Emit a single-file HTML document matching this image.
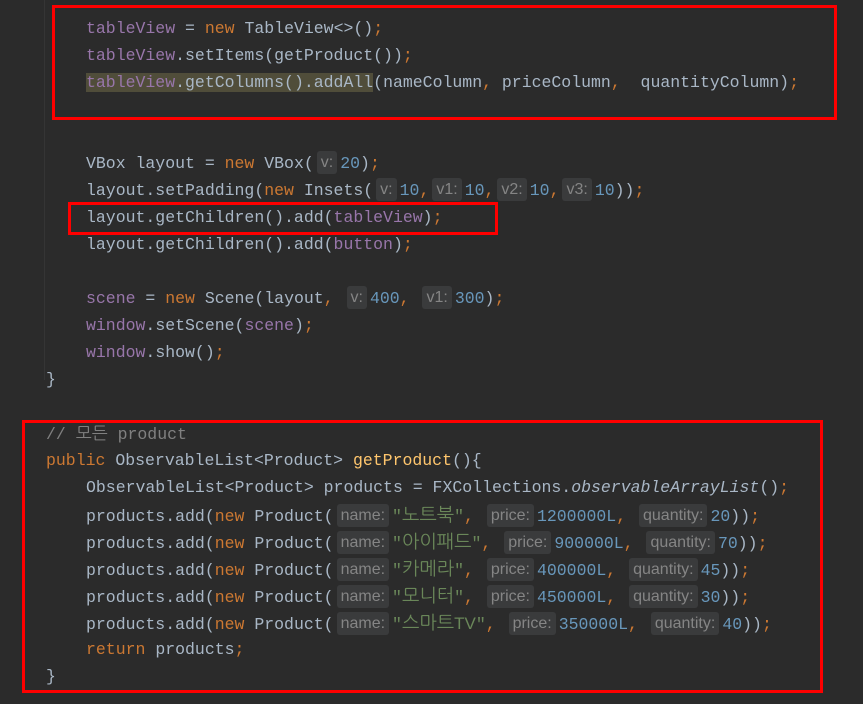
<!DOCTYPE html>
<html><head><meta charset="utf-8"><style>
body{margin:0;width:863px;height:704px;background:#2b2b2b;overflow:hidden;position:relative;font-family:"Liberation Mono","Noto Sans CJK KR",monospace;font-size:16.5px;color:#a9b7c6}
.l{position:absolute;height:27px;line-height:27px;white-space:pre}
.i{left:86px}.o{left:46px}
.f{color:#9876aa}.k{color:#cc7832}.n{color:#6897bb}.s{color:#6a8759}.c{color:#808080}.m{color:#ffc66d}.it{font-style:italic}
.ko{font-family:"NanumGothic","Noto Sans CJK KR",sans-serif;font-size:18.5px}
.h{display:inline-block;background:#3a3b3c;color:#858585;font-family:"Liberation Sans",sans-serif;font-size:16px;line-height:23px;height:23px;padding:0 4px;border-radius:3px;margin:0 3px;vertical-align:1px}
.hl{background:#504d3a}
.box{position:absolute;border:3px solid #ff0000;box-sizing:border-box}
.gl{position:absolute;left:44px;top:0;width:1px;height:380px;background:#353535}
</style></head><body>
<div class="gl"></div>
<div class="l i" style="top:15px"><span class="f">tableView</span> = <span class="k">new</span> TableView&lt;&gt;()<span class="k">;</span></div>
<div class="l i" style="top:42px"><span class="f">tableView</span>.setItems(getProduct())<span class="k">;</span></div>
<div class="l i" style="top:69px"><span class="hl"><span class="f">tableView</span>.getColumns().addAll</span>(nameColumn<span class="k">,</span> priceColumn<span class="k">,</span>  quantityColumn)<span class="k">;</span></div>
<div class="l i" style="top:150px">VBox layout = <span class="k">new</span> VBox(<span class="h">v:</span><span class="n">20</span>)<span class="k">;</span></div>
<div class="l i" style="top:177px">layout.setPadding(<span class="k">new</span> Insets(<span class="h">v:</span><span class="n">10</span><span class="k">,</span><span class="h">v1:</span><span class="n">10</span><span class="k">,</span><span class="h">v2:</span><span class="n">10</span><span class="k">,</span><span class="h">v3:</span><span class="n">10</span>))<span class="k">;</span></div>
<div class="l i" style="top:204px">layout.getChildren().add(<span class="f">tableView</span>)<span class="k">;</span></div>
<div class="l i" style="top:231px">layout.getChildren().add(<span class="f">button</span>)<span class="k">;</span></div>
<div class="l i" style="top:285px"><span class="f">scene</span> = <span class="k">new</span> Scene(layout<span class="k">,</span> <span class="h">v:</span><span class="n">400</span><span class="k">,</span> <span class="h">v1:</span><span class="n">300</span>)<span class="k">;</span></div>
<div class="l i" style="top:312px"><span class="f">window</span>.setScene(<span class="f">scene</span>)<span class="k">;</span></div>
<div class="l i" style="top:339px"><span class="f">window</span>.show()<span class="k">;</span></div>
<div class="l o" style="top:366px">}</div>
<div class="l o" style="top:420px"><span class="c">// <span class="ko" style="font-size:17px">모든</span> product</span></div>
<div class="l o" style="top:447px"><span class="k">public</span> ObservableList&lt;Product&gt; <span class="m">getProduct</span>(){</div>
<div class="l i" style="top:474px">ObservableList&lt;Product&gt; products = FXCollections.<span class="it">observableArrayList</span>()<span class="k">;</span></div>
<div class="l i" style="top:501px">products.add(<span class="k">new</span> Product(<span class="h">name:</span><span class="s">"<span class="ko">노트북</span>"</span><span class="k">,</span> <span class="h">price:</span><span class="n">1200000L</span><span class="k">,</span> <span class="h">quantity:</span><span class="n">20</span>))<span class="k">;</span></div>
<div class="l i" style="top:528px">products.add(<span class="k">new</span> Product(<span class="h">name:</span><span class="s">"<span class="ko">아이패드</span>"</span><span class="k">,</span> <span class="h">price:</span><span class="n">900000L</span><span class="k">,</span> <span class="h">quantity:</span><span class="n">70</span>))<span class="k">;</span></div>
<div class="l i" style="top:555px">products.add(<span class="k">new</span> Product(<span class="h">name:</span><span class="s">"<span class="ko">카메라</span>"</span><span class="k">,</span> <span class="h">price:</span><span class="n">400000L</span><span class="k">,</span> <span class="h">quantity:</span><span class="n">45</span>))<span class="k">;</span></div>
<div class="l i" style="top:582px">products.add(<span class="k">new</span> Product(<span class="h">name:</span><span class="s">"<span class="ko">모니터</span>"</span><span class="k">,</span> <span class="h">price:</span><span class="n">450000L</span><span class="k">,</span> <span class="h">quantity:</span><span class="n">30</span>))<span class="k">;</span></div>
<div class="l i" style="top:609px">products.add(<span class="k">new</span> Product(<span class="h">name:</span><span class="s">"<span class="ko">스마트</span><span style="font-family:'Liberation Sans',sans-serif;font-size:17px">TV</span>"</span><span class="k">,</span> <span class="h">price:</span><span class="n">350000L</span><span class="k">,</span> <span class="h">quantity:</span><span class="n">40</span>))<span class="k">;</span></div>
<div class="l i" style="top:636px"><span class="k">return</span> products<span class="k">;</span></div>
<div class="l o" style="top:663px">}</div>
<div class="box" style="left:52px;top:5px;width:785px;height:115px"></div>
<div class="box" style="left:68px;top:202px;width:430px;height:33px"></div>
<div class="box" style="left:22px;top:420px;width:801px;height:273px"></div>
</body></html>
